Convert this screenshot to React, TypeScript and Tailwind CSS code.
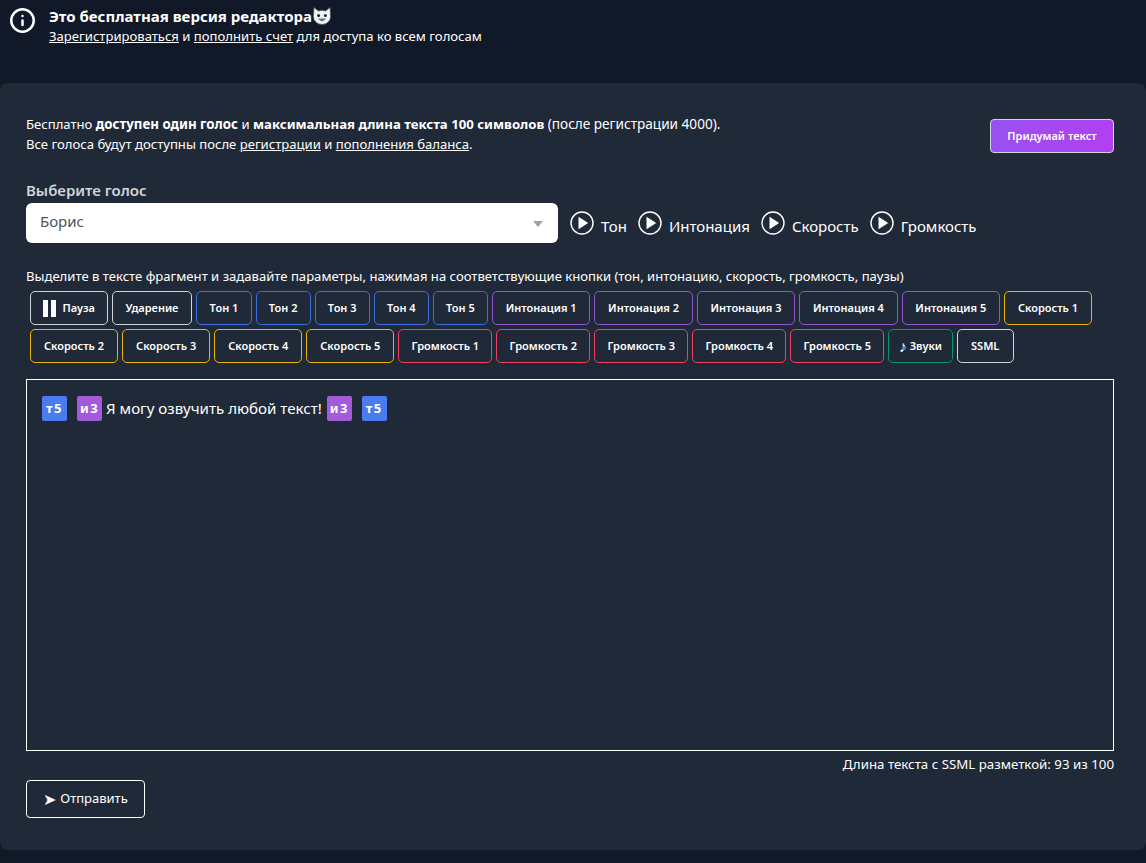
import { CircleAlert } from 'lucide-react';

const font = { fontFamily: '"Noto Sans", sans-serif' };

type Tool = { label: string; border: string; px: string; pause?: boolean; note?: boolean };

const tools: Tool[] = [
  { label: 'Пауза', border: 'border-[#d1d5db]', px: 'px-[11.5px]', pause: true },
  { label: 'Ударение', border: 'border-[#d1d5db]', px: 'px-[13px]' },
  ...[1, 2, 3, 4, 5].map((n) => ({ label: `Тон ${n}`, border: 'border-[#3b6fe0]', px: 'px-[12.2px]' })),
  ...[1, 2, 3, 4, 5].map((n) => ({ label: `Интонация ${n}`, border: 'border-[#9553d1]', px: 'px-[12.75px]' })),
  ...[1, 2, 3, 4, 5].map((n) => ({ label: `Скорость ${n}`, border: 'border-[#eab308]', px: 'px-[13px]' })),
  ...[1, 2, 3, 4, 5].map((n) => ({ label: `Громкость ${n}`, border: 'border-[#f43f5e]', px: 'px-[12.2px]' })),
  { label: 'Звуки', border: 'border-[#059669]', px: 'px-[9.5px]', note: true },
  { label: 'SSML', border: 'border-[#d1d5db]', px: 'px-[13.5px]' },
];

function PlayIcon() {
  return (
    <svg width="24" height="26" viewBox="0 0 24 26" fill="none" className="shrink-0">
      <circle cx="12" cy="13" r="11" stroke="white" strokeWidth="1.4" />
      <path d="M8.5 6.8 18.2 13 8.5 19.2Z" fill="white" />
    </svg>
  );
}

// white cat face next to the banner title
function CatIcon() {
  return (
    <svg width="20" height="20" viewBox="0 0 20 20" className="shrink-0">
      <path d="M2 1.5 6.5 5a9 9 0 0 1 7 0L18 1.5l.6 9a8.6 8 0 1 1-17.2 0Z" fill="#f3f4f6" stroke="#4b5563" strokeWidth=".8" />
      <circle cx="6.6" cy="9.4" r="1.5" fill="#1f2937" />
      <circle cx="13.4" cy="9.4" r="1.5" fill="#1f2937" />
      <path d="M6 12.6c2.4 3.4 5.6 3.4 8 0Z" fill="#6b7280" />
    </svg>
  );
}

function Tag({ text, color }: { text: string; color: string }) {
  return (
    <span className={`inline-flex h-[25px] w-[25px] items-center justify-center rounded-[2px] text-[13px] font-bold tracking-[1.5px] ${color}`}>
      {text}
    </span>
  );
}

export default function App() {
  return (
    <div className="h-[863px] overflow-hidden bg-[#111827] text-white" style={font}>
      <div className="flex h-[83px] items-start pl-[9px] pt-[6px]">
        <CircleAlert size={27} strokeWidth={2.2} className="mt-[1px] rotate-180" />
        <div className="ml-[13px]">
          <div className="flex h-[20px] items-center text-[15px] font-bold leading-[20px]">
            Это бесплатная версия редактора
            <CatIcon />
          </div>
          <div className="mt-[1px] text-[13.1px] leading-[18px]">
            <span className="underline">Зарегистрироваться</span> и <span className="underline">пополнить счет</span> для доступа ко всем голосам
          </div>
        </div>
      </div>

      <div className="h-[767px] rounded-lg bg-[#1f2937] pl-[26px] pr-[32px]">
        <div className="flex items-start justify-between pt-[31px]">
          <div className="text-[13.1px] leading-[20px]">
            <div>
              Бесплатно <b className="text-[13.3px]">доступен один голос</b> и <b className="text-[13.2px]">максимальная длина текста 100 символов</b> <span className="text-[13.6px]">(после регистрации 4000).</span>
            </div>
            <div>
              Все голоса будут доступны после <span className="underline">регистрации</span> и <span className="underline">пополнения баланса</span>.
            </div>
          </div>
          <button className="mt-[5px] flex h-[34px] w-[124px] items-center justify-center rounded border border-[#d1d5db] bg-gradient-to-r from-[#9850f0] to-[#b23ff0] text-[11px] font-semibold">
            Придумай текст
          </button>
        </div>

        <div className="mt-[26px] text-[15px] font-semibold leading-[20px] text-[#d1d5db]">Выберите голос</div>
        <div className="mt-[3px] flex items-center">
          <div className="flex h-[40px] w-[532px] items-center justify-between rounded-md bg-white pl-[14px] pr-[15px] text-[15px] text-[#4b5563]">
            <span className="pb-[3px]">Борис</span>
            <span className="mt-[1px] h-0 w-0 border-x-[5px] border-t-[6px] border-x-transparent border-t-[#9ca3af]" />
          </div>
          <div className="ml-[12px] flex items-center text-[15px]">
            <PlayIcon />
            <span className="ml-[7px] mt-[6px]">Тон</span>
            <span className="ml-[11px]"><PlayIcon /></span>
            <span className="ml-[7px] mt-[6px]">Интонация</span>
            <span className="ml-[11px]"><PlayIcon /></span>
            <span className="ml-[7px] mt-[6px]">Скорость</span>
            <span className="ml-[11px]"><PlayIcon /></span>
            <span className="ml-[7px] mt-[6px]">Громкость</span>
          </div>
        </div>

        <div className="mt-[24px] text-[13.1px] leading-[18px]">
          Выделите в тексте фрагмент и задавайте параметры, нажимая на соответствующие кнопки (тон, интонацию, скорость, громкость, паузы)
        </div>
        <div className="mt-[6px] flex flex-wrap gap-1 pl-1">
          {tools.map((t) => (
            <button
              key={t.label}
              className={`flex h-[34px] items-center justify-center rounded-[5px] border text-[11px] font-semibold ${t.px} ${t.border}`}
            >
              {t.pause && (
                <span className="mr-[7px] flex gap-[3px]">
                  <span className="h-[17px] w-[5px] bg-white" />
                  <span className="h-[17px] w-[5px] bg-white" />
                </span>
              )}
              {t.note && <span className="mr-[3px] text-[16px] leading-none">♪</span>}
              {t.label}
            </button>
          ))}
        </div>

        <div className="mt-[16px] flex h-[372px] items-start gap-[10px] border border-white pl-[15px] pt-[16px]">
          <Tag text="т5" color="bg-[#4a7cf0]" />
          <div className="flex items-center gap-[4px] text-[15.1px] leading-[25px]">
            <Tag text="и3" color="bg-[#a35bdc]" />
            <span className="mr-[1px]">Я могу озвучить любой текст!</span>
            <Tag text="и3" color="bg-[#a35bdc]" />
          </div>
          <Tag text="т5" color="bg-[#4a7cf0]" />
        </div>

        <div className="mt-[4px] text-right text-[13.3px] leading-[18px]">Длина текста с SSML разметкой: 93 из 100</div>
        <button className="mt-[7px] flex h-[38px] w-[119px] items-center justify-center rounded border border-white text-[13px]">
          <span className="mr-[4px] text-[16px] leading-none">➤</span>
          Отправить
        </button>
      </div>
    </div>
  );
}
